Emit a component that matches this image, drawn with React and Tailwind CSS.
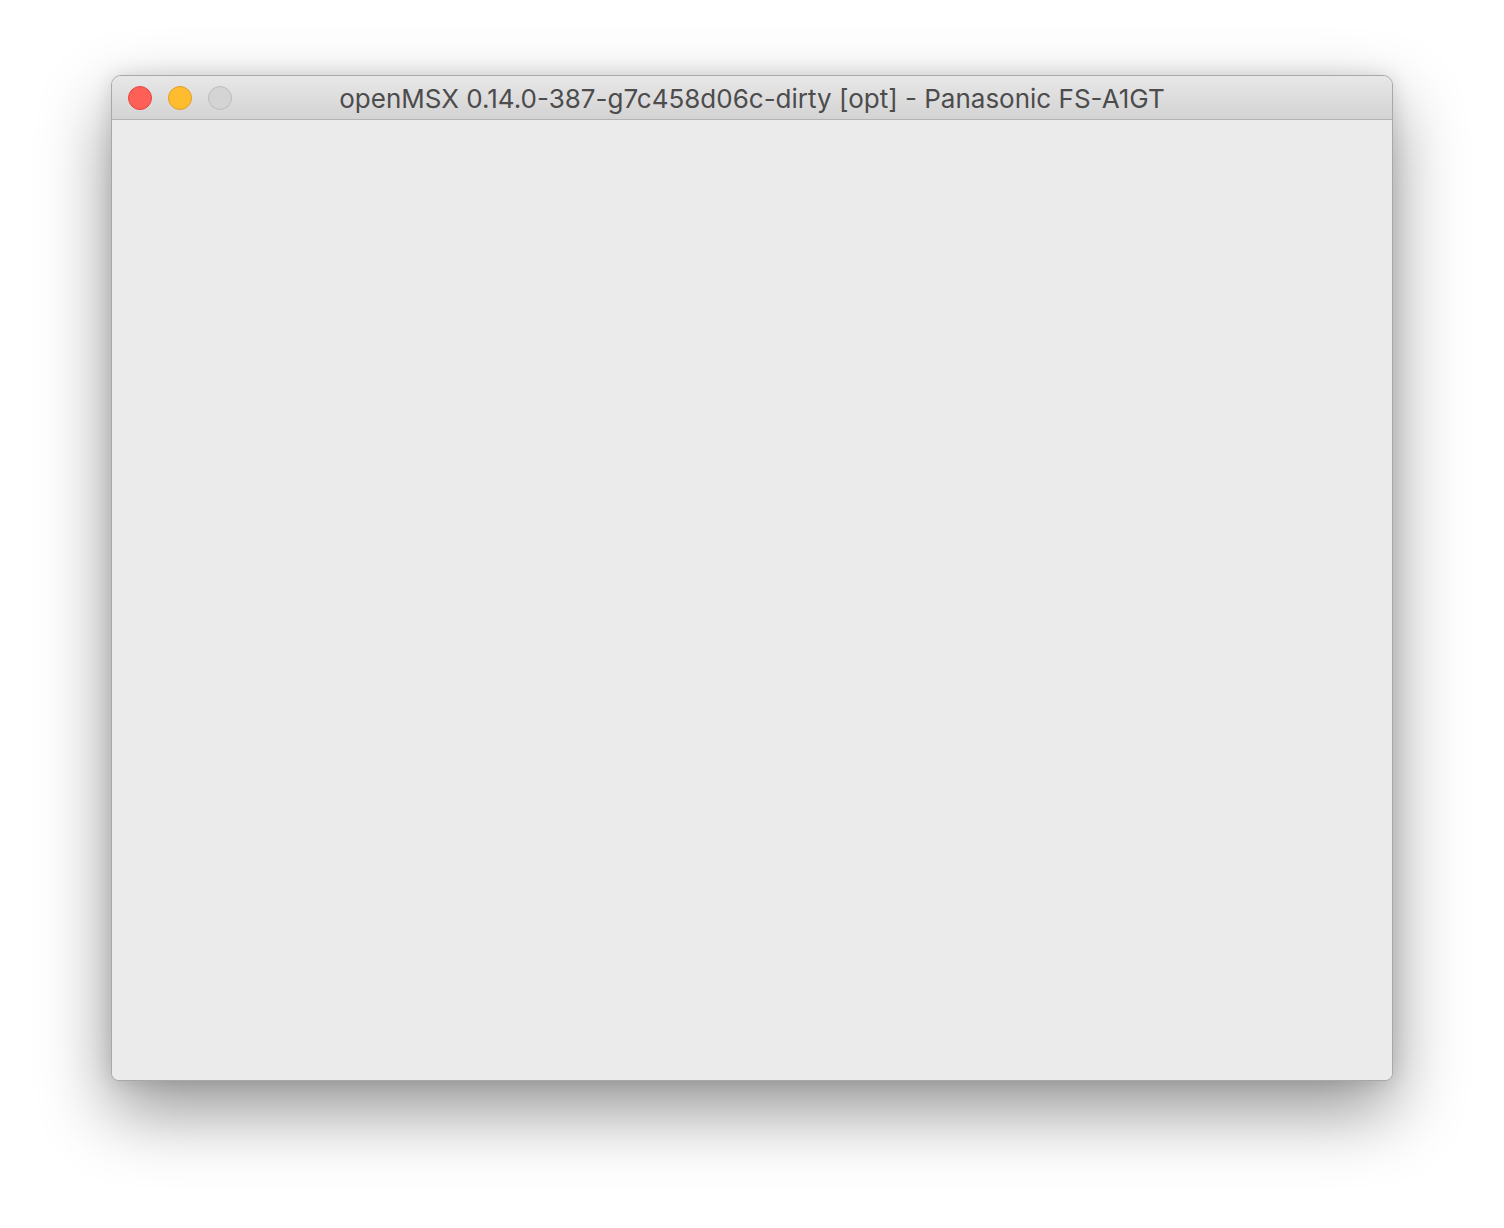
import React from "react";

const TrafficLight = ({ fill, ring }) => (
  <span
    className="block w-[24px] h-[24px] rounded-full border"
    style={{ backgroundColor: fill, borderColor: ring }}
  />
);

const App = () => {
  return (
    <div className="w-[1504px] h-[1228px] bg-white pt-[75px] pl-[111px]">
      {/* Window */}
      <div className="w-[1282px] h-[1006px] flex flex-col rounded-t-[10px] rounded-b-[8px] overflow-hidden border border-[#a8a8a8] bg-[#ebebeb] shadow-[0_30px_70px_rgba(0,0,0,0.42),0_0_20px_rgba(0,0,0,0.12)]">
        {/* Title bar */}
        <div className="relative h-[44px] shrink-0 flex items-center justify-center pt-[3px] bg-gradient-to-b from-[#e9e8e9] to-[#d4d3d4] border-b border-[#b3b3b3]">
          <div className="absolute left-[16px] top-[10px] flex gap-[16px]">
            <TrafficLight fill="#fe5f57" ring="#e14640" />
            <TrafficLight fill="#febc2e" ring="#dfa023" />
            <TrafficLight fill="#d5d4d5" ring="#bdbcbd" />
          </div>
          <span className="font-['Inter',sans-serif] text-[26px] leading-none text-[#4c4c4c] whitespace-nowrap">
            openMSX 0.14.0-387-g7c458d06c-dirty [opt] - Panasonic FS-A1GT
          </span>
        </div>
        {/* Content */}
        <div className="flex-1 bg-[#ebebeb]" />
      </div>
    </div>
  );
};

export default App;
